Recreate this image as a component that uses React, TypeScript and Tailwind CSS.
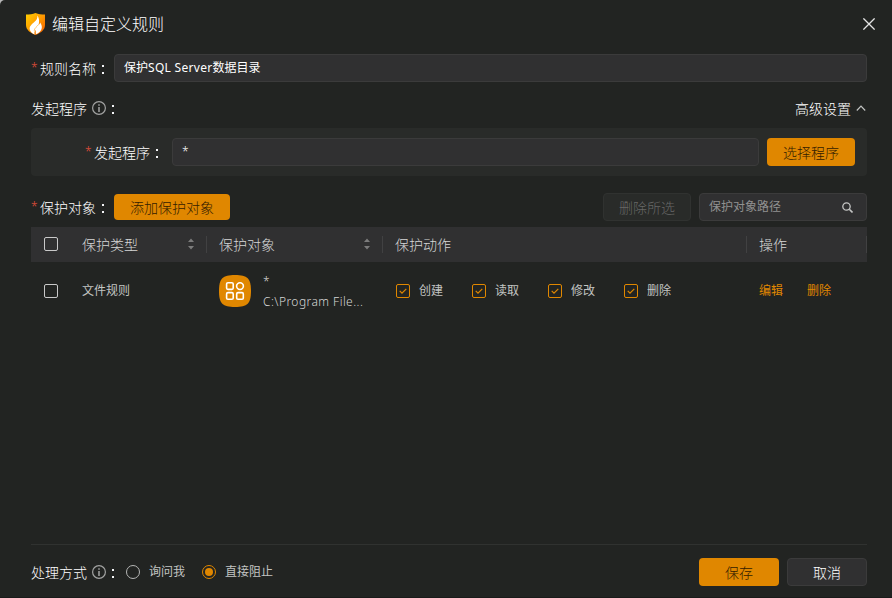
import React from 'react'

interface LabelProps {
  text: string;
  className?: string;
}

const Colon: React.FC<{ className?: string }> = ({ className }) => (
  <span className={`mt-[3px] flex flex-col gap-[5px] ${className ?? ''}`}>
    <i className="block size-0.5 bg-gray-100" />
    <i className="block size-0.5 bg-gray-100" />
  </span>
)

// Form label with the red "required" asterisk
const RequiredLabel: React.FC<LabelProps> = ({ text, className }) => (
  <div className={`flex items-center text-sm leading-5 text-white whitespace-nowrap ${className ?? ''}`}>
    <span className="w-[9px] shrink-0 text-xs text-[#e8503c]">*</span>
    <span className="pt-0.5">{text}</span>
    <Colon className="ml-1.5" />
  </div>
)

const ShieldLogo: React.FC = () => (
  <svg width="19" height="22" viewBox="0 0 19 22" fill="none">
    <defs>
      <linearGradient id="shield" x1="0" y1="0" x2="19" y2="16" gradientUnits="userSpaceOnUse">
        <stop stopColor="#ffd000" />
        <stop offset="0.55" stopColor="#ff9d00" />
        <stop offset="1" stopColor="#f56b00" />
      </linearGradient>
    </defs>
    <path d="M0 1.500C3.400 1.500 6.800 1.100 9.500 0c2.700 1.100 6.100 1.500 9.500 1.500V12c0 5-4.500 8-9.500 10C4.500 20 0 17 0 12V1.500Z" fill="url(#shield)" />
    <path d="M11.200 2.500c.6 2.800-.4 4.400-2.900 6.600C5.400 11.700 3 13.700 3.800 16.800c.6 2.300 2.800 4 5 4.700-.9-1.900-.4-3.200 1-4.600-.1 1.600.1 2.900.1 4.300 3-1.200 5.500-3.300 5.900-6.300.3-2.200-.6-4-1.700-5.500-.1 1.200-.7 2-1.500 2.600.8-3.600.8-7.200-1.400-9.500Z" fill="#fff" />
    <path d="M12.500 11.500c-1.200 2.200-4.200 3.200-4.300 6.500" stroke="#ffb84d" strokeWidth="0.800" />
  </svg>
)

const InfoIcon: React.FC = () => (
  <svg width="14" height="14" viewBox="0 0 14 14" fill="none" className="shrink-0">
    <circle cx="7" cy="7" r="6.400" stroke="#a2a3a2" strokeWidth="1.200" />
    <path d="M7 3.200v1.600M7 6v5" stroke="#8e8f8e" strokeWidth="1.800" />
  </svg>
)

const SortIcon: React.FC = () => (
  <svg width="6" height="12" viewBox="0 0 6 12" fill="#7c7c7c" className="-mt-0.5">
    <path d="M3 0.500 6 4H0ZM3 11.500 0 8h6Z" />
  </svg>
)

const AppsIcon: React.FC = () => (
  <svg width="32" height="32" viewBox="0 0 32 32" fill="none" className="shrink-0">
    <path d="M16 0c12.500 0 16 3.500 16 16s-3.500 16-16 16S0 28.500 0 16 3.500 0 16 0Z" fill="#e08700" />
    <g stroke="#fff" strokeWidth="1.600">
      <rect x="7.600" y="7.800" width="6.600" height="6.600" rx="1.300" />
      <circle cx="21" cy="11.100" r="3.400" />
      <rect x="7.600" y="17.600" width="6.600" height="6.600" rx="1.300" />
      <rect x="17.700" y="17.600" width="6.600" height="6.600" rx="1.300" />
    </g>
  </svg>
)

const Checkbox: React.FC<{ checked?: boolean }> = ({ checked }) => (
  <span className={`flex size-3.5 shrink-0 items-center justify-center rounded-xs border ${checked ? 'border-[#e08700]' : 'border-[#c9c9c9]'}`}>
    {checked && (
      <svg width="8" height="6" viewBox="0 0 8 6" fill="none">
        <path d="m.7 2.800 2.300 2.300L7.300.8" stroke="#e08700" strokeWidth="1.200" />
      </svg>
    )}
  </span>
)

const Radio: React.FC<{ label: string; checked?: boolean }> = ({ label, checked }) => (
  <label className="flex items-center text-xs font-normal text-[#c3c4c3]">
    <span className={`mr-[9px] flex size-3.5 items-center justify-center rounded-full border ${checked ? 'border-[#e08700]' : 'border-[#b5b6b5]'}`}>
      {checked && <span className="size-2 rounded-full bg-[#e08700]" />}
    </span>
    {label}
  </label>
)

const App: React.FC = () => {
  const actions = ['创建', '读取', '修改', '删除']

  return (
    <div className="bg-[linear-gradient(135deg,#b8b8b8_8px,#1a1b1a_8px)]">
      <div className="flex h-[598px] w-[892px] flex-col rounded-tl-[5px] border-b border-[#1a1b1a] bg-[#222422] pl-[31px] pr-[25px] font-['Noto_Sans','Noto_Sans_CJK_SC',sans-serif] font-light text-[#c3c4c3]">
        <header className="-ml-[5px] flex h-12 shrink-0 items-center">
          <ShieldLogo />
          <h1 className="ml-[7px] text-base font-light text-white">编辑自定义规则</h1>
          <svg width="12" height="12" viewBox="0 0 12 12" className="-mr-2 ml-auto" stroke="#e4e4e4" strokeWidth="1.300">
            <path d="m.4.4 11.200 11.200M11.600.4.4 11.600" />
          </svg>
        </header>

        <div className="mt-1.5 flex h-7 shrink-0 items-center">
          <RequiredLabel text="规则名称" className="w-[83px]" />
          <div className="flex h-7 flex-1 items-center rounded-sm border border-[#3b3b3b] bg-[#303031] px-[9px] text-xs font-normal text-white">
            保护<span className="tracking-[0.3px]">SQL Server</span>数据目录
          </div>
        </div>

        <div className="mt-4 flex h-5 shrink-0 items-center text-sm text-white">
          <span className="mr-[5px] pt-0.5">发起程序</span>
          <InfoIcon />
          <Colon className="ml-1.5" />
          <span className="ml-auto mr-[5px] pt-0.5">高级设置</span>
          <svg width="10" height="6" viewBox="0 0 10 6" fill="none" className="mr-[1px]">
            <path d="m.8 5.500 4.200-4.300 4.200 4.300" stroke="#c3c4c3" strokeWidth="1.200" />
          </svg>
        </div>

        <div className="mt-[10px] flex h-12 shrink-0 items-center rounded-sm bg-[#292b29] pr-3">
          <RequiredLabel text="发起程序" className="w-[141px] pl-[54px]" />
          <div className="flex h-7 flex-1 items-center rounded-sm border border-[#3b3b3b] bg-[#303031] px-[9px] text-xs text-white">*</div>
          <button className="ml-2 h-7 w-[88px] rounded-sm bg-[#e08700] pt-0.5 text-sm text-[#332000]">选择程序</button>
        </div>

        <div className="mt-[17px] flex h-7 shrink-0 items-center">
          <RequiredLabel text="保护对象" className="w-[83px]" />
          <button className="h-[26px] w-[116px] rounded-sm bg-[#e08700] pt-0.5 text-sm text-[#332000]">添加保护对象</button>
          <button className="ml-auto h-7 w-[88px] rounded-sm border border-[#303230] bg-[#292b29] pt-0.5 text-sm text-[#666766]">删除所选</button>
          <div className="ml-2 flex h-7 w-[168px] items-center justify-between rounded-sm border border-[#3b3b3b] bg-[#303031] pl-[9px] pr-[13px] text-xs font-normal text-[#909190]">
            保护对象路径
            <svg width="11" height="11" viewBox="0 0 11 11" fill="none" stroke="#c3c4c3">
              <circle cx="4.500" cy="4.500" r="3.700" strokeWidth="1.300" />
              <path d="m7.300 7.300 3.200 3.200" strokeWidth="1.600" />
            </svg>
          </div>
        </div>

        <div className="mt-1.5 flex h-[35px] shrink-0 items-center bg-[#303031] text-sm text-[#d6d7d6]">
          <div className="flex h-[17px] w-[176px] items-center border-r border-[#414142] pl-[13px] pr-3">
            <div className="pb-0.5">
              <Checkbox />
            </div>
            <span className="ml-6 mr-auto">保护类型</span>
            <SortIcon />
          </div>
          <div className="flex h-[17px] w-[176px] items-center justify-between border-r border-[#414142] pl-3 pr-3">
            保护对象
            <SortIcon />
          </div>
          <div className="flex h-[17px] w-[364px] items-center border-r border-[#414142] pl-3">保护动作</div>
          <div className="flex h-[17px] flex-1 items-center border-r border-[#414142] pl-3">操作</div>
        </div>

        <div className="flex h-[58px] shrink-0 items-center text-xs font-normal">
          <div className="flex w-[176px] items-center pl-[13px]">
            <Checkbox />
            <span className="ml-6">文件规则</span>
          </div>
          <div className="flex w-[176px] items-center pl-3">
            <AppsIcon />
            <div className="ml-3 pt-0.5 leading-5 font-light tracking-[0.45px] text-[#d6d7d6] whitespace-nowrap">
              <p>*</p>
              <p>C:\Program File...</p>
            </div>
          </div>
          <div className="flex w-[364px] items-center pl-[13px]">
            {actions.map((action) => (
              <label key={action} className="flex w-[76px] items-center gap-[9px]">
                <Checkbox checked />
                {action}
              </label>
            ))}
          </div>
          <div className="flex gap-6 pl-3 text-[#e08700]">
            <a>编辑</a>
            <a>删除</a>
          </div>
        </div>

        <footer className="mt-auto flex h-[53px] shrink-0 items-start border-t border-[#303230] pt-[13px]">
          <div className="flex h-7 items-center text-sm text-white">
            <span className="mr-[5px] pt-0.5">处理方式</span>
            <InfoIcon />
            <Colon className="ml-1.5" />
          </div>
          <div className="ml-3 flex h-7 items-center">
            <Radio label="询问我" />
            <span className="w-[17px]" />
            <Radio label="直接阻止" checked />
          </div>
          <button className="ml-auto h-7 w-20 rounded-sm bg-[#e08700] pt-0.5 text-sm text-[#332000]">保存</button>
          <button className="ml-2 h-7 w-20 rounded-sm border border-[#3b3b3b] bg-[#303031] pt-0.5 text-sm text-white">取消</button>
        </footer>
      </div>
    </div>
  )
}

export default App
